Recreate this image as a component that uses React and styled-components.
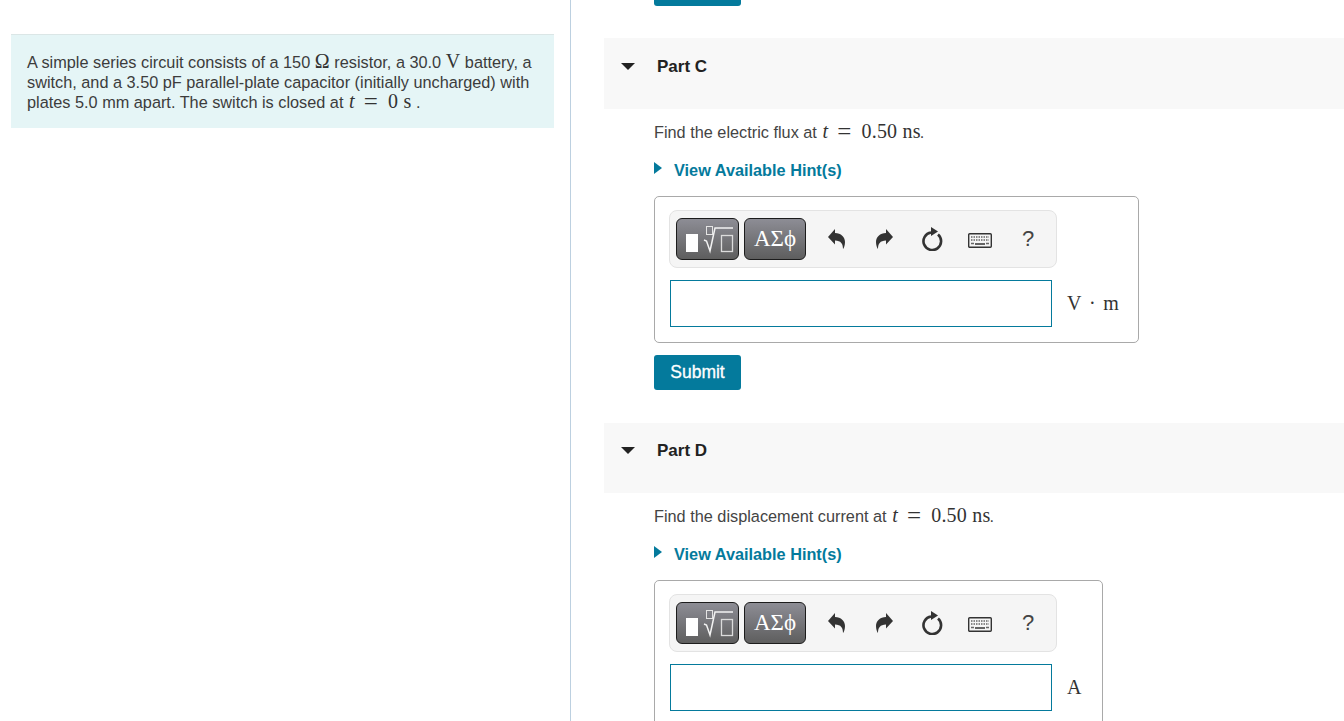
import React from 'react'
import styled, { createGlobalStyle } from 'styled-components'

const Global = createGlobalStyle`
  html, body { margin: 0; padding: 0; height: 100%; overflow: hidden; background: #fff; }
  body { font-family: "Liberation Sans", Arial, sans-serif; font-size: 16.3px; color: #333; }
`

const Page = styled.div`
  display: flex;
  width: 1344px;
  height: 721px;
  overflow: hidden;
`
const LeftPane = styled.div`
  flex: 0 0 571px;
  padding: 34px 16px 0 11px;
  box-sizing: border-box;
  border-right: 1px solid #bcd0e0;
`
const Intro = styled.div`
  background: #e5f5f6;
  border-top: 1px solid #dbe6e6;
  padding: 17px 16px 16px;
  height: 94px;
  box-sizing: border-box;
  line-height: 20px;
  color: #3c3c3c;
  width: 543px;
`
const RightPane = styled.div`
  flex: 1;
  padding-left: 33px;
  min-width: 0;
`
const ClippedButton = styled.div`
  width: 87px;
  height: 6px;
  margin-left: 50px;
  background: #047a9c;
  border-radius: 0 0 3px 3px;
`
const PartHeader = styled.div`
  display: flex;
  align-items: flex-start;
  height: ${p => p.$height}px;
  box-sizing: border-box;
  margin-top: ${p => p.$top}px;
  background: #f8f8f8;
  padding-top: ${p => p.$height - 52}px;
`
const Caret = styled.span`
  width: 0;
  height: 0;
  margin: 6px 0 0 17px;
  border-left: 7px solid transparent;
  border-right: 7px solid transparent;
  border-top: 7px solid #222;
`
const PartTitle = styled.div`
  margin-left: 22px;
  font-weight: 700;
  font-size: 17px;
  line-height: 20px;
  color: #222;
`
const Body = styled.div`
  padding-left: 50px;
`
const Question = styled.div`
  margin-top: 13px;
  line-height: 20px;
  color: #444;
`
const Math = styled.span`
  font-family: "Liberation Serif", "DejaVu Serif", serif;
  font-size: 20px;
  line-height: 0;
  color: #333;
  letter-spacing: 0.2px;
`
const MathVar = styled(Math)`
  font-style: italic;
  margin-left: 1px;
`
const Eq = styled(Math)`
  font-size: 25px;
  margin: 0 10px 0 9px;
  vertical-align: -2px;
`
const Period = styled.span`
  margin-left: -1px;
`
const Hint = styled.div`
  display: flex;
  align-items: center;
  margin-top: 18px;
  height: 20px;
  font-weight: 700;
  color: #047a9c;
`
const HintArrow = styled.span`
  width: 0;
  height: 0;
  margin: -4px 12px 0 0;
  border-top: 6px solid transparent;
  border-bottom: 6px solid transparent;
  border-left: 8px solid #047a9c;
`
const AnswerBox = styled.div`
  margin-top: 16px;
  width: ${p => p.$width}px;
  box-sizing: border-box;
  border: 1px solid #a9a9a9;
  border-radius: 5px;
  padding: 13px 15px 15px 14px;
`
const Toolbar = styled.div`
  display: flex;
  align-items: center;
  width: 388px;
  height: 58px;
  box-sizing: border-box;
  background: #f5f5f5;
  border: 1px solid #e3e3e3;
  border-radius: 8px;
  padding-left: 6px;
`
const TemplateButton = styled.div`
  display: flex;
  flex: 0 0 ${p => p.$width}px;
  align-items: center;
  justify-content: center;
  box-sizing: border-box;
  height: 42px;
  margin-right: 5px;
  border: 1px solid #1c1c1c;
  border-radius: 6px;
  background: linear-gradient(#8d8d95, #5e5e5e);
  color: #fff;
  font-family: "Liberation Serif", serif;
  font-size: 23px;
`
const ToolIcon = styled.div`
  display: flex;
  align-items: center;
  justify-content: center;
  flex: 0 0 ${p => p.$width}px;
  height: 42px;
  color: #333;
`
const Help = styled(ToolIcon)`
  font-size: 22px;
  color: #444;
`
const InputRow = styled.div`
  display: flex;
  align-items: center;
  margin: 12px 0 0 1px;
`
const Field = styled.div`
  width: 382px;
  height: 47px;
  box-sizing: border-box;
  background: #fff;
  border: 1px solid #047a9c;
`
const Unit = styled(Math)`
  margin: -1px 0 0 15px;
  white-space: pre;
  letter-spacing: 0.4px;
  word-spacing: 2px;
`
const Submit = styled.button`
  display: block;
  width: 87px;
  height: 35px;
  margin-top: 12px;
  padding: 0;
  border: 0;
  border-radius: 3px;
  background: #047a9c;
  color: #fff;
  font-family: inherit;
  font-size: 17.5px;
  font-weight: 400;
  -webkit-text-stroke: 0.3px #fff;
`

const TemplateIcon = () => (
  <svg width="61" height="40" viewBox="0 0 61 40" fill="none">
    <rect x="9" y="15" width="12" height="18" fill="#fff" />
    <rect x="29.500" y="7.500" width="6" height="8" stroke="#e4e4e4" />
    <path d="M27 21l2.500 1 3.500 10 5-23h18" stroke="#f2f2f2" strokeWidth="1.500" />
    <rect x="44.500" y="16.500" width="11" height="16" stroke="#dcdcdc" strokeWidth="1.300" />
  </svg>
)

const Undo = ({ flip }) => (
  <svg width="18" height="20" viewBox="0 0 18 20" style={flip ? { transform: 'scaleX(-1)' } : undefined}>
    <path d="M0 8 L7 0 V4 C13 4 17 8 17 13 C17 16 16 19 15 20 C15 15 13 11.500 7 11.500 V15.500 Z" fill="#333" />
  </svg>
)

const Reset = () => (
  <svg width="22" height="24" viewBox="0 0 22 24" fill="none">
    <path d="M10 5.500 A8.800 8.800 0 1 0 17 7.500" stroke="#333" strokeWidth="2.600" />
    <path d="M10 0 L17 4.500 L10 9 Z" fill="#333" />
  </svg>
)

const Keyboard = () => (
  <svg width="24" height="15" viewBox="0 0 24 15" fill="none" style={{ marginTop: 3 }}>
    <rect x="0.700" y="0.700" width="22.600" height="13.600" rx="1" fill="#f5f5f5" stroke="#333" strokeWidth="1.400" />
    <path d="M3 4h18M3 7h18" stroke="#666" strokeWidth="1.500" strokeDasharray="1.500 1" />
    <path d="M3 10.500h3M18 10.500h3" stroke="#666" strokeWidth="1.500" />
    <path d="M7 11h10" stroke="#333" strokeWidth="1.500" />
  </svg>
)

function Tools() {
  return (
    <Toolbar>
      <TemplateButton $width={63}><TemplateIcon /></TemplateButton>
      <TemplateButton $width={62}>ΑΣϕ</TemplateButton>
      <ToolIcon $width={52}><Undo /></ToolIcon>
      <ToolIcon $width={42}><Undo flip /></ToolIcon>
      <ToolIcon $width={54}><Reset /></ToolIcon>
      <ToolIcon $width={42}><Keyboard /></ToolIcon>
      <Help $width={54}>?</Help>
    </Toolbar>
  )
}

function Part({ title, top, height, question, unit, width, submit }) {
  return (
    <>
      <PartHeader $top={top} $height={height}>
        <Caret />
        <PartTitle>{title}</PartTitle>
      </PartHeader>
      <Body>
        <Question>
          {question} <MathVar>t</MathVar><Eq>=</Eq><Math>0.50 ns</Math><Period>.</Period>
        </Question>
        <Hint><HintArrow />View Available Hint(s)</Hint>
        <AnswerBox $width={width}>
          <Tools />
          <InputRow>
            <Field />
            <Unit>{unit}</Unit>
          </InputRow>
        </AnswerBox>
        {submit && <Submit>Submit</Submit>}
      </Body>
    </>
  )
}

export default function App() {
  return (
    <Page>
      <Global />
      <LeftPane>
        <Intro>
          A simple series circuit consists of a 150 <Math>Ω</Math> resistor, a 30.0 <Math>V</Math> battery, a
          switch, and a 3.50 pF parallel-plate capacitor (initially uncharged) with
          plates 5.0 mm apart. The switch is closed at <MathVar>t</MathVar><Eq>=</Eq><Math>0 s</Math> .
        </Intro>
      </LeftPane>
      <RightPane>
        <ClippedButton />
        <Part title="Part C" top={32} height={71} question="Find the electric flux at" unit="V · m" width={485} submit />
        <Part title="Part D" top={33} height={70} question="Find the displacement current at" unit="A" width={449} />
      </RightPane>
    </Page>
  )
}
